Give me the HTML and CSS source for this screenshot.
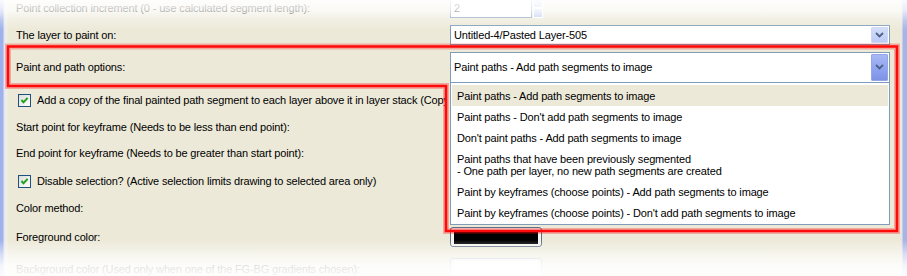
FILE: index.html
```html
<!DOCTYPE html>
<html>
<head>
<meta charset="utf-8">
<link rel="stylesheet" href="styles.css">
</head>
<body>
<div class="dialog">
  <div class="rows">
    <div class="row r0">
      <span class="label">Point collection increment (0 - use calculated segment length):</span>
      <div class="spin">
        <div class="spin-box">2</div>
        <div class="spin-btns"><div class="spin-up"></div><div class="spin-down"></div></div>
      </div>
    </div>
    <div class="row r1">
      <span class="label">The layer to paint on:</span>
      <div class="combo small">
        <span class="combo-text">Untitled-4/Pasted Layer-505</span>
        <span class="combo-btn"><svg width="9" height="6" viewBox="0 0 9 6"><path d="M1 1 L4.5 4.5 L8 1" fill="none" stroke="#4d6185" stroke-width="1.8"/></svg></span>
      </div>
    </div>
    <div class="row r2">
      <span class="label">Paint and path options:</span>
      <div class="combo big">
        <span class="combo-text">Paint paths - Add path segments to image</span>
        <span class="combo-btn hot"><svg width="9" height="6" viewBox="0 0 9 6"><path d="M1 1 L4.5 4.5 L8 1" fill="none" stroke="#4d6185" stroke-width="1.8"/></svg></span>
      </div>
    </div>
    <div class="row r3">
      <label class="check clipped"><span class="box"><svg width="11" height="11" viewBox="0 0 11 11"><path d="M2.5 5 L4.5 7.3 L8.6 2.8" fill="none" stroke="#21a121" stroke-width="2"/></svg></span><span class="check-text">Add a copy of the final painted path segment to each layer above it in layer stack (Copy to layers above)</span></label>
    </div>
    <div class="row r4"><span class="label">Start point for keyframe (Needs to be less than end point):</span></div>
    <div class="row r5"><span class="label">End point for keyframe (Needs to be greater than start point):</span></div>
    <div class="row r6">
      <label class="check"><span class="box"><svg width="11" height="11" viewBox="0 0 11 11"><path d="M2.5 5 L4.5 7.3 L8.6 2.8" fill="none" stroke="#21a121" stroke-width="2"/></svg></span><span class="check-text">Disable selection? (Active selection limits drawing to selected area only)</span></label>
    </div>
    <div class="row r7"><span class="label">Color method:</span></div>
    <div class="row r8">
      <span class="label">Foreground color:</span>
      <div class="swatch"><div class="swatch-fill black"></div></div>
    </div>
    <div class="row r9">
      <span class="label">Background color (Used only when one of the FG-BG gradients chosen):</span>
      <div class="swatch light"><div class="swatch-fill white"></div></div>
    </div>
  </div>

  <ul class="droplist">
    <li class="sel">Paint paths - Add path segments to image</li>
    <li>Paint paths - Don't add path segments to image</li>
    <li>Don't paint paths - Add path segments to image</li>
    <li>Paint paths that have been previously segmented<br>- One path per layer, no new path segments are created</li>
    <li>Paint by keyframes (choose points) - Add path segments to image</li>
    <li>Paint by keyframes (choose points) - Don't add path segments to image</li>
  </ul>

  <svg class="annotation" width="907" height="276" viewBox="0 0 907 276">
    <path d="M8 46.5 H897 V231 H446 V86 H8 Z" fill="none" stroke="rgba(255,0,0,0.28)" stroke-width="6"/>
    <path d="M8 46.5 H897 V231 H446 V86 H8 Z" fill="none" stroke="#ff0a0a" stroke-width="2.6"/>
  </svg>

  <div class="fade-top"></div>
  <div class="fade-bottom"></div>
</div>
</body>
</html>
```
FILE: styles.css
```css
* { box-sizing: border-box; }
html, body { margin: 0; padding: 0; background: #fff; }
body { font-family: "Liberation Sans", Arial, sans-serif; font-size: 11px; letter-spacing: -0.15px; color: #000; }

.dialog {
  position: relative;
  width: 907px;
  height: 276px;
  overflow: hidden;
  background:
    linear-gradient(to right, #9fb1ea 0, #9fb1ea 3px, #dde3f5 4px, #f1efe5 6px, rgba(236,233,216,0) 9px),
    linear-gradient(to left, #a6b4e6 0, #a6b4e6 4px, #e4e4ee 5px, rgba(236,233,216,0) 6px),
    #ece9d8;
}

.rows { display: flex; flex-direction: column; margin-top: -6px; }

.row {
  display: grid;
  grid-template-columns: 434px 441px;
  align-items: center;
  padding-left: 16px;
  white-space: nowrap;
}
.r0 { height: 28px; }
.r1 { height: 26px; }
.r2 { height: 38px; }
.r3 { height: 28px; }
.r4 { height: 26px; }
.r5 { height: 27px; }
.r6 { height: 28px; }
.r7 { height: 26px; }
.r8 { height: 32px; }
.r9 { height: 32px; }

.label { line-height: 13px; }

.check { display: flex; align-items: center; padding-left: 2px; line-height: 13px; grid-column: 1 / span 2; }
.check.clipped { width: 430px; overflow: hidden; }
.check-text { white-space: nowrap; }
.check.clipped .check-text { flex: 1 1 auto; min-width: 0; overflow: hidden; text-overflow: clip; }
.check .box {
  flex: none;
  width: 13px; height: 13px;
  border: 1px solid #1c5180;
  background: linear-gradient(135deg, #dcdcd7 0, #fff 100%);
  display: inline-flex; align-items: center; justify-content: center;
  margin-right: 6px;
}

.spin { display: flex; align-items: flex-end; height: 20px; }
.spin-box {
  width: 82px; height: 20px;
  border: 1px solid #7f9db9;
  background: #fff;
  padding: 2px 3px;
  line-height: 14px;
}
.spin-btns { display: flex; flex-direction: column; margin-left: 1px; }
.spin-up, .spin-down { width: 10px; height: 10px; background: linear-gradient(#cfdaf7, #b8c8f2); border: 1px solid #fff; }

.combo {
  position: relative;
  display: flex;
  align-items: center;
  width: 440px;
  background: #fff;
  border: 1px solid #7f9db9;
  padding-left: 3px;
}
.combo.small { height: 20px; }
.combo.big { height: 31px; }
.combo-text { flex: 1; line-height: 13px; }
.combo-btn {
  align-self: stretch;
  margin: 1px;
  width: 17px;
  display: flex; align-items: center; justify-content: center;
  background: linear-gradient(to bottom, #d3ddf9 0, #bccbf5 100%);
  border: 1px solid #ccd8f6;
  border-radius: 1px;
}
.combo-btn.hot {
  background: linear-gradient(to bottom, #a7b8f3 0, #8da2ee 60%, #7d92e4 100%);
  border-color: #93a6ea;
}

.droplist {
  position: absolute;
  left: 450px;
  top: 82px;
  width: 440px;
  margin: 0;
  padding: 2px 1px 1px;
  list-style: none;
  background: #fff;
  border: 1px solid #7f9db9;
}
.droplist li {
  padding: 5px 5px 4px;
  line-height: 12px;
  white-space: nowrap;
}
.droplist li.sel { background: #ece9d8; }

.swatch {
  width: 92px; height: 20px;
  border: 1px solid #5d6f88;
  border-radius: 3px;
  background: #f4f3ee;
  padding: 2px 3px;
}
.swatch.light { border-color: #b9c4d3; height: 22px; }
.swatch-fill { width: 100%; height: 100%; }
.swatch-fill.black { background: #000; }
.swatch-fill.white { background: #fff; }

.annotation { position: absolute; left: 0; top: 0; pointer-events: none; }

.fade-top {
  position: absolute; left: 0; top: 0; width: 100%; height: 30px;
  background: linear-gradient(to bottom, rgba(255,255,255,0.93) 0, rgba(255,255,255,0.75) 10px, rgba(255,255,255,0.3) 20px, rgba(255,255,255,0) 30px);
}
.fade-bottom {
  position: absolute; left: 0; bottom: 0; width: 100%; height: 36px;
  background: linear-gradient(to bottom, rgba(255,255,255,0) 0, rgba(255,255,255,0.55) 14px, rgba(255,255,255,0.88) 26px, rgba(255,255,255,0.95) 36px);
}
```
